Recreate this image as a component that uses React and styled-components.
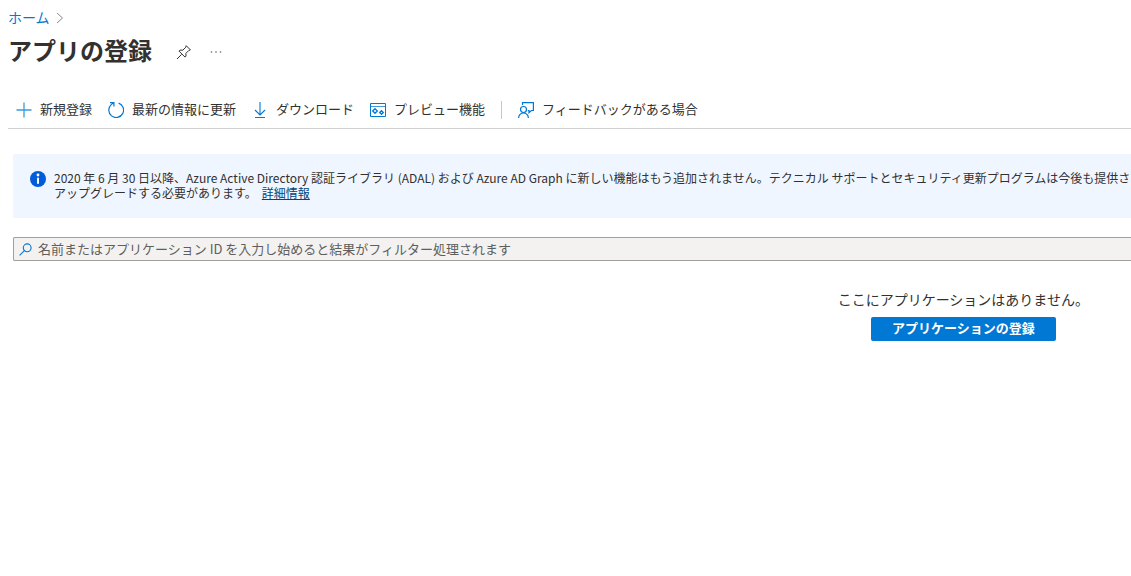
import styled, { createGlobalStyle } from 'styled-components';

const GlobalStyle = createGlobalStyle`
* {
    box-sizing: border-box;
}
body {
    margin: 0;
    background: #fff;
    color: #323130;
    font-family: "Noto Sans CJK JP", sans-serif;
    font-size: 13px;
}
button, input {
    font-family: inherit;
    font-size: inherit;
    color: inherit;
}
`

const Page = styled.div`
overflow-x: hidden;
min-height: 100vh;
`

const Breadcrumb = styled.nav`
display: flex;
align-items: center;
gap: 6px;
height: 36px;
padding-left: 8px;
font-size: 14px;
a {
    padding-bottom: 2px;
    color: #0078d4;
    text-decoration: none;
}
`

const TitleRow = styled.header`
display: flex;
align-items: center;
height: 32px;
padding-left: 8px;
`

const Title = styled.h1`
margin: 0 16px 0 0;
padding-bottom: 4px;
font-size: 24px;
line-height: 28px;
font-weight: 700;
`

const IconButton = styled.button`
display: flex;
align-items: center;
justify-content: center;
width: 32px;
height: 32px;
padding: 0;
border: 0;
background: none;
`

const Toolbar = styled.div`
display: flex;
align-items: center;
gap: 16px;
height: 38px;
margin: 23px 0 0 8px;
padding-left: 8px;
border-bottom: 1px solid #d2d0ce;
`

const ToolButton = styled.button`
display: flex;
align-items: center;
gap: 8px;
padding: 0;
border: 0;
background: none;
line-height: 20px;
white-space: nowrap;
`

const ToolLabel = styled.span`
padding-bottom: 2px;
`

const Divider = styled.span`
width: 1px;
height: 18px;
background: #c8c6c4;
`

const Content = styled.main`
padding: 25px 0 0 13px;
`

const Banner = styled.section`
display: flex;
gap: 8px;
height: 64px;
padding: 16px 0 0 17px;
background: #f0f6ff;
border-radius: 2px 0 0 2px;
svg {
    flex: none;
    margin-top: 1px;
}
`

const BannerText = styled.p`
margin: 0;
font-size: 12px;
line-height: 15px;
white-space: nowrap;
a {
    margin-left: 5px;
    color: #004578;
}
`

const SearchBox = styled.label`
display: flex;
align-items: center;
gap: 6px;
height: 24px;
margin-top: 19px;
padding-left: 5px;
background: #f3f2f1;
border: 1px solid #a19f9d;
border-right: 0;
border-radius: 2px 0 0 2px;
`

const SearchInput = styled.input`
flex: 1;
height: 22px;
padding: 0 0 2px;
border: 0;
outline: 0;
background: none;
&::placeholder {
    color: #605e5c;
    opacity: 1;
}
`

const EmptyState = styled.section`
display: flex;
flex-direction: column;
align-items: center;
gap: 7px;
width: 170%;
margin-top: 28px;
p {
    margin: 0;
    font-size: 14px;
    line-height: 21px;
}
`

const PrimaryButton = styled.button`
height: 24px;
padding: 0 21px 2px;
border: 0;
border-radius: 2px;
background: #0078d4;
color: #fff;
font-weight: 700;
line-height: 20px;
`

const ChevronIcon = () => (
    <svg width="8" height="12" viewBox="0 0 8 12" fill="none" stroke="#8a8886" aria-hidden="true">
        <path d="M1 1l5.5 5L1 11" />
    </svg>
)

const PinIcon = () => (
    <svg width="16" height="16" viewBox="0 0 16 16" fill="none" stroke="#323130" aria-hidden="true">
        <path d="M1 15l4.6-4.6M10.2 1.7l4.2 4.2-1.5.5-3 3 .1 2.7-1 1-6-6 1-1 2.8.1 3-3z" />
    </svg>
)

const MoreIcon = () => (
    <svg width="14" height="4" viewBox="0 0 14 4" fill="#605e5c" aria-hidden="true">
        <circle cx="2.5" cy="2" r=".8" />
        <circle cx="7" cy="2" r=".8" />
        <circle cx="11.5" cy="2" r=".8" />
    </svg>
)

const PlusIcon = () => (
    <svg width="16" height="16" viewBox="0 0 16 16" fill="none" stroke="#3b9ae0" strokeWidth="1.3" aria-hidden="true">
        <path d="M8 .5v15M.5 8h15" />
    </svg>
)

const RefreshIcon = () => (
    <svg width="16" height="16" viewBox="0 0 16 16" fill="none" stroke="#0078d4" strokeWidth="1.2" aria-hidden="true">
        <path d="M10.6 1.1A7.4 7.4 0 1 1 3.2 2.6L5.5.8M2 .6h3.9v4" />
    </svg>
)

const DownloadIcon = () => (
    <svg width="16" height="16" viewBox="0 0 16 16" fill="none" stroke="#0078d4" strokeWidth="1.1" aria-hidden="true">
        <path d="M8 0v13M3 8l5 5 5-5M3 15.5h10" />
    </svg>
)

const PreviewIcon = () => (
    <svg width="16" height="16" viewBox="0 0 16 16" fill="none" stroke="#0078d4" aria-hidden="true">
        <path d="M.5 1.5h15v13H.5z" />
        <path d="M1 4.5h14" stroke="#3b9ae0" />
        <path d="M5 6.7L7.3 9 5 11.3 2.700 9zM11.500 8.700l1.800 1.800-1.800 1.800-1.800-1.800z" strokeWidth="1.3" />
    </svg>
)

const FeedbackIcon = () => (
    <svg width="16" height="16" viewBox="0 0 16 16" fill="none" stroke="#0078d4" strokeWidth="1.2" aria-hidden="true">
        <path d="M4.5 3V.6h10.9v7.9h-2l-2.4 2.2V8.5H9.8" />
        <circle cx="5.5" cy="7.5" r="3" />
        <path d="M.6 16a4.9 5.2 0 0 1 9.8 0" />
    </svg>
)

const InfoIcon = () => (
    <svg width="16" height="16" viewBox="0 0 16 16" fill="#015cda" aria-hidden="true">
        <circle cx="8" cy="8" r="8" />
        <circle cx="8" cy="4" r="1.4" fill="#fff" />
        <rect x="7" y="6.5" width="2" height="6.5" rx="1" fill="#fff" />
    </svg>
)

const SearchIcon = () => (
    <svg width="13" height="13" viewBox="0 0 13 13" fill="none" stroke="#0078d4" strokeWidth="1.1" aria-hidden="true">
        <circle cx="8.2" cy="4.8" r="3.9" />
        <path d="M5.4 7.6L.6 12.4" />
    </svg>
)

const tools = [
    { label: '新規登録', Icon: PlusIcon },
    { label: '最新の情報に更新', Icon: RefreshIcon },
    { label: 'ダウンロード', Icon: DownloadIcon },
    { label: 'プレビュー機能', Icon: PreviewIcon },
]

const App = () => {
    return (
        <Page>
            <GlobalStyle />
            <Breadcrumb>
                <a href="#home">ホーム</a>
                <ChevronIcon />
            </Breadcrumb>
            <TitleRow>
                <Title>アプリの登録</Title>
                <IconButton aria-label="ピン留め"><PinIcon /></IconButton>
                <IconButton aria-label="その他"><MoreIcon /></IconButton>
            </TitleRow>
            <Toolbar>
                {tools.map(({ label, Icon }) => (
                    <ToolButton key={label}>
                        <Icon />
                        <ToolLabel>{label}</ToolLabel>
                    </ToolButton>
                ))}
                <Divider />
                <ToolButton>
                    <FeedbackIcon />
                    <ToolLabel>フィードバックがある場合</ToolLabel>
                </ToolButton>
            </Toolbar>
            <Content>
                <Banner>
                    <InfoIcon />
                    <BannerText>
                        2020 年 6 月 30 日以降、Azure Active Directory 認証ライブラリ (ADAL) および Azure AD Graph に新しい機能はもう追加されません。テクニカル サポートとセキュリティ更新プログラムは今後も提供さ
                        <br />
                        アップグレードする必要があります。
                        <a href="#details">詳細情報</a>
                    </BannerText>
                </Banner>
                <SearchBox>
                    <SearchIcon />
                    <SearchInput type="text" aria-label="検索" placeholder="名前またはアプリケーション ID を入力し始めると結果がフィルター処理されます" />
                </SearchBox>
                <EmptyState>
                    <p>ここにアプリケーションはありません。</p>
                    <PrimaryButton>アプリケーションの登録</PrimaryButton>
                </EmptyState>
            </Content>
        </Page>
    );
}

export default App;
